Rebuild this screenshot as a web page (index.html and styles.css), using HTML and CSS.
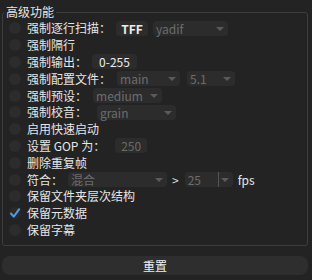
FILE: index.html
```html
<!DOCTYPE html>
<html lang="zh">
<head>
    <meta charset="UTF-8">
    <title>高级功能</title>
    <link rel="stylesheet" href="styles.css">
</head>
<body>
    <fieldset class="group">
        <legend>高级功能</legend>
        <div class="row">
            <span class="check"></span>
            <span class="label">强制逐行扫描：</span>
            <span class="field bold tff">TFF</span>
            <span class="combo yadif">yadif</span>
        </div>
        <div class="row">
            <span class="check"></span>
            <span class="label">强制隔行</span>
        </div>
        <div class="row">
            <span class="check"></span>
            <span class="label">强制输出：</span>
            <span class="field range">0-255</span>
        </div>
        <div class="row">
            <span class="check"></span>
            <span class="label">强制配置文件：</span>
            <span class="combo profile">main</span>
            <span class="combo level">5.1</span>
        </div>
        <div class="row">
            <span class="check"></span>
            <span class="label">强制预设：</span>
            <span class="combo preset">medium</span>
        </div>
        <div class="row">
            <span class="check"></span>
            <span class="label">强制校音：</span>
            <span class="combo tune">grain</span>
        </div>
        <div class="row">
            <span class="check"></span>
            <span class="label">启用快速启动</span>
        </div>
        <div class="row">
            <span class="check"></span>
            <span class="label">设置 GOP 为：</span>
            <span class="field off gop">250</span>
        </div>
        <div class="row">
            <span class="check"></span>
            <span class="label">删除重复帧</span>
        </div>
        <div class="row">
            <span class="check"></span>
            <span class="label">符合：</span>
            <span class="combo mode">混合</span>
            <span class="sign">&gt;</span>
            <span class="combo edit fps">25</span>
            <span class="label">fps</span>
        </div>
        <div class="row">
            <span class="check"></span>
            <span class="label">保留文件夹层次结构</span>
        </div>
        <div class="row">
            <span class="check on">
                <svg width="12" height="12" viewBox="0 0 12 12">
                    <path d="M2 6.5 L4.8 9.6 L10.2 2.2" fill="none" stroke="#4c9be4" stroke-width="2" stroke-linecap="round" stroke-linejoin="round"/>
                </svg>
            </span>
            <span class="label">保留元数据</span>
        </div>
        <div class="row">
            <span class="check"></span>
            <span class="label">保留字幕</span>
        </div>
    </fieldset>
    <div class="reset">重置</div>
</body>
</html>
```

FILE: styles.css
```css
body {
    margin: 0;
    background-color: #232323;
    color: #e6e6e6;
    font-family: 'Noto Sans CJK SC', 'Noto Sans', sans-serif;
    font-size: 12px;
    line-height: 16px;
}
.group {
    margin: 4px 4px 0 2px;
    padding: 0 6px 7px 6px;
    border: 1px solid #3d3d3d;
    border-radius: 3px;
    min-width: 0;
}
.group legend {
    margin-left: -5px;
    padding: 0 2px;
    color: #e6e6e6;
}
.row {
    display: flex;
    align-items: center;
    height: 16.8px;
    white-space: nowrap;
}
.check {
    width: 12px;
    height: 12px;
    border-radius: 50%;
    background-color: #2c2c2c;
    margin-right: 6px;
    display: flex;
    align-items: center;
    justify-content: center;
    flex-shrink: 0;
}
.check.on {
    background-color: #2a2a2a;
}
.field,
.combo {
    height: 15px;
    line-height: 15px;
    background-color: #2c2c2c;
    border-radius: 4px;
    margin-left: 5px;
    box-sizing: border-box;
    flex-shrink: 0;
}
.field {
    text-align: center;
    color: #ececec;
}
.field.bold {
    font-weight: bold;
}
.field.off {
    color: #6a6a6a;
}
.combo {
    position: relative;
    padding-left: 3px;
    color: #6c6c6c;
}
.combo::after {
    content: '';
    position: absolute;
    right: 4px;
    top: 6px;
    border-left: 4px solid transparent;
    border-right: 4px solid transparent;
    border-top: 4px solid #5a5a5a;
}
.combo.edit::before {
    content: '';
    position: absolute;
    right: 14px;
    top: 0;
    bottom: 0;
    border-left: 1px solid #555;
}
.tff { width: 32px; }
.yadif { width: 75px; }
.range { width: 45px; }
.profile { width: 63px; margin-left: 6px; }
.level { width: 48px; margin-left: 7px; }
.preset { width: 69px; margin-left: 6px; }
.tune { width: 79px; margin-left: 10px; }
.gop { width: 32px; margin-left: 10px; }
.mode { width: 99px; }
.fps { width: 48px; margin-left: 6px; }
.sign {
    margin-left: 5px;
    color: #dcdcdc;
}
.row .fps + .label {
    margin-left: 5px;
}
.reset {
    margin: 10px 4px 0 2px;
    height: 19px;
    line-height: 19px;
    border-radius: 8px;
    background-color: #2e2e2e;
    text-align: center;
    color: #f0f0f0;
}
```
